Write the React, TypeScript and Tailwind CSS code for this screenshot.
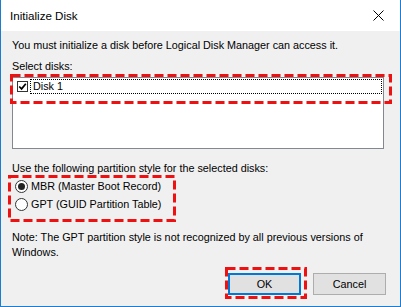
import React from 'react';

const font = { fontFamily: '"Liberation Sans", Arial, sans-serif' };

const CheckBox = () => (
  <span className="w-[11px] h-[11px] border border-[#333333] bg-white flex items-center justify-center shrink-0">
    <svg width="9" height="9" viewBox="0 0 9 9">
      <path d="M1.2 4.5 L3.6 6.9 L7.8 1.8" fill="none" stroke="#000" strokeWidth="1.7" />
    </svg>
  </span>
);

const Radio = ({ checked }: { checked?: boolean }) => (
  <span className="w-[13px] h-[13px] rounded-full border border-[#333333] bg-white flex items-center justify-center shrink-0">
    {checked && <span className="w-[7px] h-[7px] rounded-full bg-[#222222]" />}
  </span>
);

export default function App() {
  return (
    <div
      className="relative w-[401px] h-[307px] flex flex-col border-x border-b border-[#1c7dd0] bg-[#f0f0f0] text-[10.8px] leading-[15px] text-black overflow-hidden"
      style={font}
    >
      {/* title bar */}
      <div className="h-[31px] bg-white flex items-center justify-between pl-[9px] pr-[16px] shrink-0">
        <span className="text-[11.6px]">Initialize Disk</span>
        <svg width="11" height="11" viewBox="0 0 11 11">
          <path d="M0.5 0.5 L10.5 10.5 M10.5 0.5 L0.5 10.5" stroke="#000" strokeWidth="1" />
        </svg>
      </div>

      <div className="flex flex-col pl-[11px] pr-[14px]">
        <p className="mt-[7px]">You must initialize a disk before Logical Disk Manager can access it.</p>
        <p className="mt-[6px]">Select disks:</p>

        <div className="mt-[3px] w-[372px] h-[72px] border border-[#828790] bg-white p-[1px] pl-[4px]">
          <div className="flex items-center gap-[2px] h-[15px]">
            <CheckBox />
            <div className="flex-1 h-[15px] border border-dotted border-black flex items-center pl-[2px]">
              Disk 1
            </div>
          </div>
        </div>

        <p className="mt-[12px]">Use the following partition style for the selected disks:</p>

        <div className="mt-[1px] flex flex-col pl-[3px]">
          <label className="h-[18px] flex items-center gap-[3px]">
            <Radio checked />
            <span>MBR (Master Boot Record)</span>
          </label>
          <label className="h-[18px] flex items-center gap-[3px]">
            <Radio />
            <span>GPT (GUID Partition Table)</span>
          </label>
        </div>

        <p className="mt-[17px]">
          Note: The GPT partition style is not recognized by all previous versions of
          <br />
          Windows.
        </p>

        <div className="mt-[13px] flex justify-end gap-[12px]">
          <button className="w-[73px] h-[22px] bg-[#e1e1e1] border-2 border-[#0078d7] flex items-center justify-center">
            OK
          </button>
          <button className="w-[73px] h-[22px] bg-[#e1e1e1] border border-[#adadad] flex items-center justify-center">
            Cancel
          </button>
        </div>
      </div>

      {/* red annotation boxes */}
      <svg className="absolute left-[9px] top-[74px] pointer-events-none" width="382" height="30">
        <rect x="1.5" y="1.5" width="379" height="27" fill="none" stroke="#ee1111" strokeWidth="3" strokeDasharray="9 4" />
      </svg>
      <svg className="absolute left-[7px] top-[175px] pointer-events-none" width="168" height="47">
        <rect x="1.5" y="1.5" width="165" height="44" fill="none" stroke="#ee1111" strokeWidth="3" strokeDasharray="9 4" />
      </svg>
      <svg className="absolute left-[224px] top-[267px] pointer-events-none" width="82" height="32">
        <rect x="1.5" y="1.5" width="79" height="29" fill="none" stroke="#ee1111" strokeWidth="3" strokeDasharray="9 4" />
      </svg>
    </div>
  );
}
